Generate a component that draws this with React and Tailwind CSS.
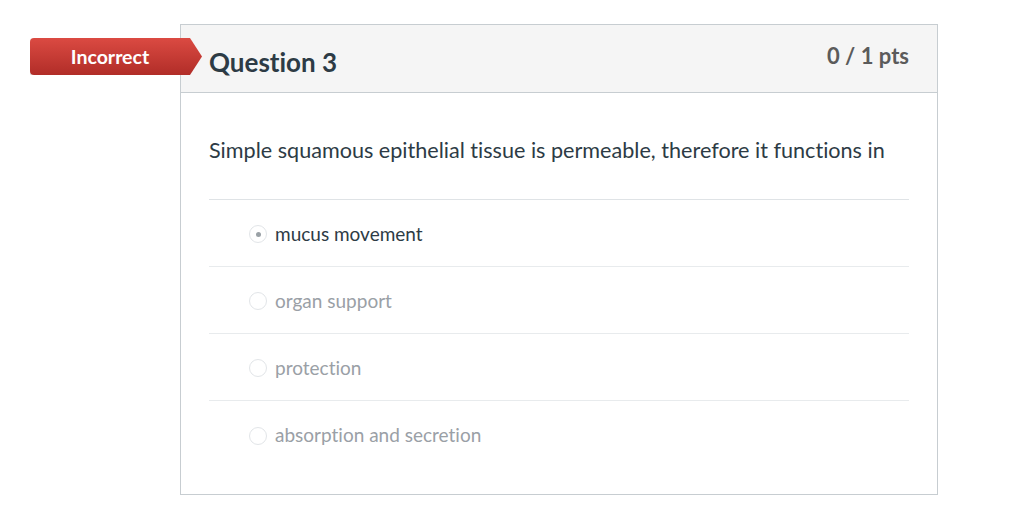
const answers = [
  { text: 'mucus movement', selected: true },
  { text: 'organ support', selected: false },
  { text: 'protection', selected: false },
  { text: 'absorption and secretion', selected: false },
];

export default function App() {
  return (
    <div className="min-h-[532px] bg-white pt-6 pl-[180px] font-['Lato','Liberation_Sans',sans-serif] [font-variant-ligatures:none]">
      {/* Question card */}
      <div className="relative w-[758px] border border-[#c7cdd1] bg-white">
        {/* Result badge */}
        <div className="absolute left-[-151px] top-[13px] z-10 flex h-[37px] w-[172px] items-center rounded-l-[4px] bg-gradient-to-b from-[#db4a42] to-[#b12d28] shadow-[0_1px_2px_rgba(0,0,0,0.25)] [clip-path:polygon(0_0,160px_0,172px_50%,160px_100%,0_100%)]">
          <span className="w-[160px] text-center text-[19.5px] font-bold text-white">Incorrect</span>
        </div>

        {/* Header */}
        <div className="flex h-[68px] items-start justify-between border-b border-[#c7cdd1] bg-[#f5f5f5] px-7">
          <h2 className="mt-[22px] text-[26px] font-bold leading-[31px] text-[#2d3b45]">Question 3</h2>
          <span className="mt-[17px] text-[22px] font-bold leading-[27px] text-[#5b5b5b]">0 / 1 pts</span>
        </div>

        {/* Body */}
        <div className="px-7 pb-[26px]">
          <p className="border-b border-[#dfe3e6] pt-[43px] pb-[35px] text-[21.6px] leading-[28px] text-[#2d3b45]">
            Simple squamous epithelial tissue is permeable, therefore it functions in
          </p>
          {answers.map((a, i) => (
            <div
              key={a.text}
              className={`flex h-[67px] items-center pl-10 pt-[2px] ${i < answers.length - 1 ? 'border-b border-[#e8ebed]' : ''}`}
            >
              <span className="flex h-[18px] w-[18px] items-center justify-center rounded-full border border-[#e2e5e8] bg-white">
                {a.selected && <span className="h-[5px] w-[5px] rounded-full bg-[#9aa1a6]" />}
              </span>
              <span className={`ml-2 text-[19px] ${a.selected ? 'text-[#2d3b45]' : 'text-[#9aa0a6]'}`}>{a.text}</span>
            </div>
          ))}
        </div>
      </div>
    </div>
  );
}
